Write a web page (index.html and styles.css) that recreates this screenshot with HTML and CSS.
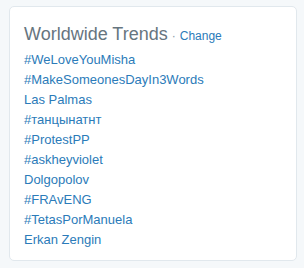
FILE: index.html
```html
<!DOCTYPE html>
<html lang="en">
<head>
  <meta charset="UTF-8">
  <title>Trends</title>
  <link rel="stylesheet" href="styles.css">
</head>
<body>
  <div class="trends">
    <div class="trends-head">
      <span class="title">Worldwide Trends</span>
      <span class="dot">·</span>
      <a class="change">Change</a>
    </div>
    <ul class="trend-list">
      <li><a>#WeLoveYouMisha</a></li>
      <li><a>#MakeSomeonesDayIn3Words</a></li>
      <li><a>Las Palmas</a></li>
      <li><a>#танцынатнт</a></li>
      <li><a>#ProtestPP</a></li>
      <li><a>#askheyviolet</a></li>
      <li><a>Dolgopolov</a></li>
      <li><a>#FRAvENG</a></li>
      <li><a>#TetasPorManuela</a></li>
      <li><a>Erkan Zengin</a></li>
    </ul>
  </div>
</body>
</html>
```

FILE: styles.css
```css
* { margin:0; padding:0; box-sizing:border-box; }
body { font-family: Arial, "Liberation Sans", sans-serif; background:#f5f8fa; padding:6px 7px 7px 9px; height:268px; }
.trends { background:#fff; border:1px solid #e1e8ed; border-radius:5px; height:255px; padding:17px 14px 0 14px; }
.trends-head { display:flex; align-items:baseline; gap:4px; color:#66757f; }
.title { font-size:18px; }
.dot { font-size:12px; color:#8899a6; }
.change { font-size:12px; color:#2b7bb9; }
.trend-list { list-style:none; margin-top:5px; }
.trend-list li { font-size:13px; line-height:20px; }
.trend-list a { color:#2b7bb9; }
```
